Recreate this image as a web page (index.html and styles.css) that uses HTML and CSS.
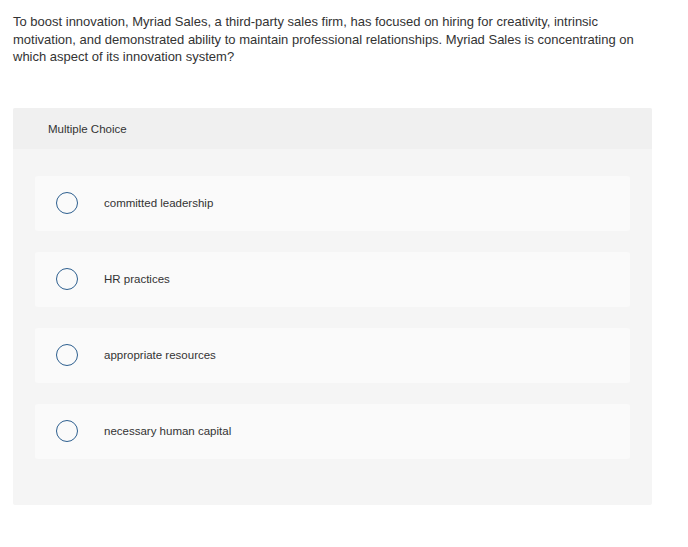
FILE: index.html
```html
<!DOCTYPE html>
<html>
<head>
<meta charset="utf-8">
<link rel="stylesheet" href="styles.css">
</head>
<body>
<p class="question">To boost innovation, Myriad Sales, a third-party sales firm, has focused on hiring for creativity, intrinsic motivation, and demonstrated ability to maintain professional relationships. Myriad Sales is concentrating on which aspect of its innovation system?</p>
<div class="panel">
  <div class="panel-head">Multiple Choice</div>
  <div class="panel-body">
    <div class="option"><span class="radio"></span><span class="label">committed leadership</span></div>
    <div class="option"><span class="radio"></span><span class="label">HR practices</span></div>
    <div class="option"><span class="radio"></span><span class="label">appropriate resources</span></div>
    <div class="option"><span class="radio"></span><span class="label">necessary human capital</span></div>
  </div>
</div>
</body>
</html>
```
FILE: styles.css
```css
html, body { margin: 0; padding: 0; background: #fff; }
body {
  font-family: "Liberation Sans", Arial, sans-serif;
  color: #333;
  padding: 13px 13px 0 13px;
  width: 639px;
}
.question {
  margin: 0;
  font-size: 13px;
  line-height: 17.5px;
  color: #333;
}
.panel {
  margin-top: 42px;
  background: #f5f5f5;
  border-radius: 2px;
  width: 639px;
}
.panel-head {
  background: #f0f0f0;
  height: 41px;
  line-height: 42px;
  padding-left: 35px;
  font-size: 11.5px;
  color: #333;
  border-radius: 2px 2px 0 0;
}
.panel-body {
  padding: 27px 22px 46px 22px;
  display: flex;
  flex-direction: column;
  gap: 21px;
}
.option {
  background: #fafafa;
  border-radius: 3px;
  height: 55px;
  display: flex;
  align-items: center;
  padding-left: 21px;
}
.radio {
  width: 20px;
  height: 20px;
  border: 1.4px solid #2d5f8f;
  border-radius: 50%;
  flex: none;
}
.label {
  margin-left: 26px;
  font-size: 11.5px;
  color: #333;
}
```
